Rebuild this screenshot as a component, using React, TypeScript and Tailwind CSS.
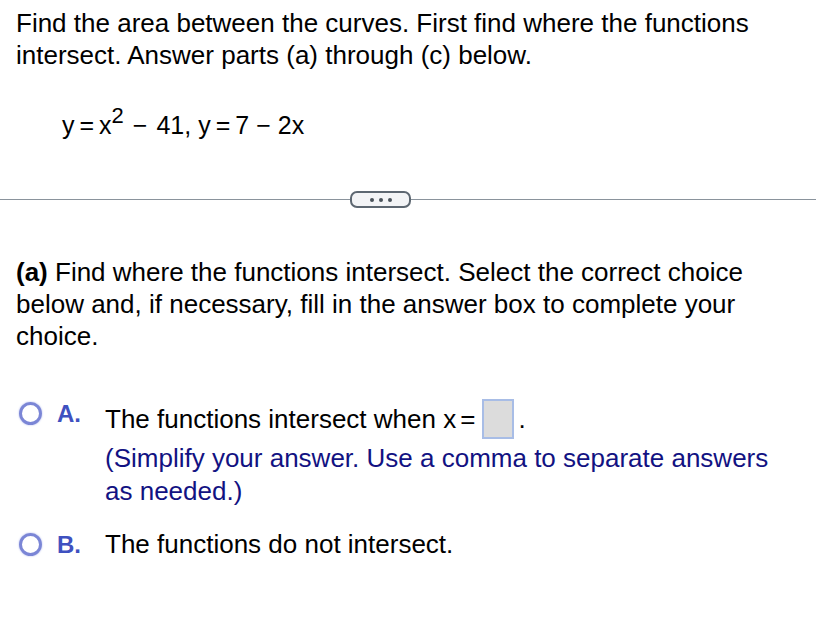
export default function App() {
  return (
    <div className="w-[816px] h-[638px] bg-white text-black font-['Liberation_Sans',Arial,sans-serif] overflow-hidden">
      <div className="pl-[16px] pt-[7px] text-[26px] leading-[32px]">
        <p>Find the area between the curves. First find where the functions</p>
        <p>intersect. Answer parts (a) through (c) below.</p>
      </div>

      <div className="pl-[62px] pt-[39px] text-[25px] leading-[30px]">
        y<span className="mx-[5px]">=</span>x<span className="relative -top-[11px] text-[22px]">2</span>
        <span className="mx-[9px]">−</span>41, y<span className="mx-[5px]">=</span>7<span className="mx-[7px]">−</span>2x
      </div>

      <div className="mt-[49px] flex items-center">
        <div className="h-px w-[350px] bg-[#8a939c]" />
        <div className="w-[61px] h-[17px] rounded-[7px] border-2 border-[#5d6771] bg-[#f3f4f6] flex items-center justify-center gap-[5px]">
          <span className="w-[4px] h-[4px] rounded-full bg-[#4a525a]" />
          <span className="w-[4px] h-[4px] rounded-full bg-[#4a525a]" />
          <span className="w-[4px] h-[4px] rounded-full bg-[#4a525a]" />
        </div>
        <div className="h-px flex-1 bg-[#8a939c]" />
      </div>

      <div className="pl-[16px] pt-[48px] text-[26px] leading-[32px]">
        <p><span className="font-bold">(a)</span> Find where the functions intersect. Select the correct choice</p>
        <p>below and, if necessary, fill in the answer box to complete your</p>
        <p>choice.</p>
      </div>

      <div className="pl-[19px] pt-[47px] flex">
        <div className="w-[23px] h-[23px] mt-[3px] rounded-full border-[3px] border-[#7b86d6] shadow-[0_0_2px_#aab2ec]" />
        <div className="ml-[15px] w-[48px] text-[24px] font-bold text-[#3f51c0] -mt-[3px]">A.</div>
        <div className="text-[26px]">
          <div className="flex items-center h-[40px]">
            <span>The functions intersect when x<span className="ml-[4px]">=</span></span>
            <span className="ml-[7px] w-[32px] h-[40px] bg-[#dcdcdc] border-2 border-[#a8bde6]" />
            <span className="ml-[4px]">.</span>
          </div>
          <div className="text-[#121282] leading-[33px] pt-[3px]">
            <p>(Simplify your answer. Use a comma to separate answers</p>
            <p>as needed.)</p>
          </div>
        </div>
      </div>

      <div className="pl-[19px] pt-[17px] flex items-center">
        <div className="w-[23px] h-[23px] rounded-full border-[3px] border-[#7b86d6] shadow-[0_0_2px_#aab2ec]" />
        <div className="ml-[15px] w-[48px] text-[24px] font-bold text-[#3f51c0]">B.</div>
        <div className="text-[26px]">The functions do not intersect.</div>
      </div>
    </div>
  );
}
